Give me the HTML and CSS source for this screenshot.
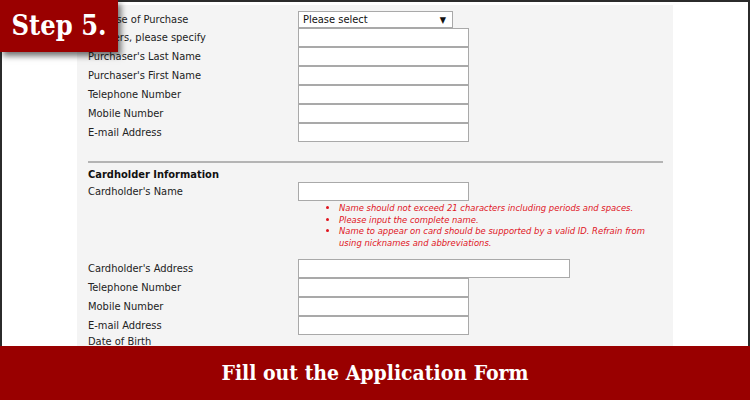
FILE: index.html
```html
<!DOCTYPE html>
<html>
<head>
<meta charset="utf-8">
<link rel="stylesheet" href="styles.css">
</head>
<body>
<div class="page">
  <div class="frame">
    <div class="panel">
      <div class="row row-select">
        <span class="label">Purpose of Purchase</span>
        <div class="select"><span>Please select</span><span class="arrow">▼</span></div>
      </div>
      <div class="row"><span class="label">If others, please specify</span><input class="field" type="text"></div>
      <div class="row"><span class="label">Purchaser's Last Name</span><input class="field" type="text"></div>
      <div class="row"><span class="label">Purchaser's First Name</span><input class="field" type="text"></div>
      <div class="row"><span class="label">Telephone Number</span><input class="field" type="text"></div>
      <div class="row"><span class="label">Mobile Number</span><input class="field" type="text"></div>
      <div class="row"><span class="label">E-mail Address</span><input class="field" type="text"></div>

      <hr class="sep">

      <div class="heading">Cardholder Information</div>
      <div class="row"><span class="label">Cardholder's Name</span><input class="field" type="text"></div>
      <div class="row">
        <span></span>
        <ul class="notes">
          <li>Name should not exceed 21 characters including periods and spaces.</li>
          <li>Please input the complete name.</li>
          <li>Name to appear on card should be supported by a valid ID. Refrain from using nicknames and abbreviations.</li>
        </ul>
      </div>
      <div class="row row-address"><span class="label">Cardholder's Address</span><input class="field wide" type="text"></div>
      <div class="row"><span class="label">Telephone Number</span><input class="field" type="text"></div>
      <div class="row"><span class="label">Mobile Number</span><input class="field" type="text"></div>
      <div class="row"><span class="label">E-mail Address</span><input class="field" type="text"></div>
      <div class="row row-dob"><span class="label">Date of Birth</span><span></span></div>
    </div>
  </div>
  <div class="banner">Fill out the Application Form</div>
  <div class="badge">Step 5.</div>
</div>
</body>
</html>
```
FILE: styles.css
```css
* { box-sizing: border-box; }
html, body { margin: 0; padding: 0; background: #fff; }
.page {
  position: relative;
  width: 750px;
  height: 400px;
  display: flex;
  flex-direction: column;
  overflow: hidden;
  font-family: "DejaVu Sans Condensed", "DejaVu Sans", sans-serif;
  font-size: 11px;
  color: #222;
}
.frame {
  flex: 1;
  border: 2px solid #2b2b2b;
  border-bottom: none;
  padding: 3px 0 0 75px;
  overflow: hidden;
  background: #fff;
}
.panel {
  width: 596px;
  height: 100%;
  background: #f4f4f4;
  padding: 6px 10px 0 11px;
}
.row {
  display: grid;
  grid-template-columns: 210px auto;
  align-items: center;
  justify-items: start;
}
.label { line-height: 13px; }
.field {
  width: 171px;
  height: 19px;
  margin: 0;
  padding: 0 3px;
  border: 1px solid #a9a9a9;
  background: #fff;
  font: inherit;
}
.field.wide { width: 272px; }
.select {
  width: 155px;
  height: 17px;
  border: 1px solid #a9a9a9;
  background: #fff;
  display: flex;
  justify-content: space-between;
  align-items: center;
  padding: 0 6px 0 4px;
  color: #111;
}
.arrow { font-size: 9px; }
.sep {
  border: none;
  height: 2px;
  background: #b4b4b4;
  margin: 19px 0 0 0;
  width: 575px;
}
.heading {
  font-weight: bold;
  line-height: 14px;
  margin-top: 5px;
  color: #111;
}
.notes {
  margin: 1px 0 0 0;
  padding: 0 0 0 41px;
  width: 368px;
  color: #e0141e;
  font-style: italic;
  font-size: 9.4px;
  line-height: 11.5px;
}
.row-address { margin-top: 11px; }
.banner {
  height: 54px;
  flex: none;
  background: #990000;
  color: #fff;
  display: flex;
  align-items: center;
  justify-content: center;
  font-family: "DejaVu Serif Condensed", "DejaVu Serif", serif;
  font-weight: bold;
  font-size: 21px;
  padding-bottom: 2px;
}
.badge {
  position: absolute;
  left: 0;
  top: 0;
  width: 118px;
  height: 52px;
  background: #9a0000;
  color: #fff;
  display: flex;
  align-items: center;
  justify-content: center;
  font-family: "DejaVu Serif Condensed", "DejaVu Serif", serif;
  font-weight: bold;
  font-size: 27px;
  padding-bottom: 1px;
  box-shadow: 3px 4px 6px rgba(0, 0, 0, 0.55);
}
```
